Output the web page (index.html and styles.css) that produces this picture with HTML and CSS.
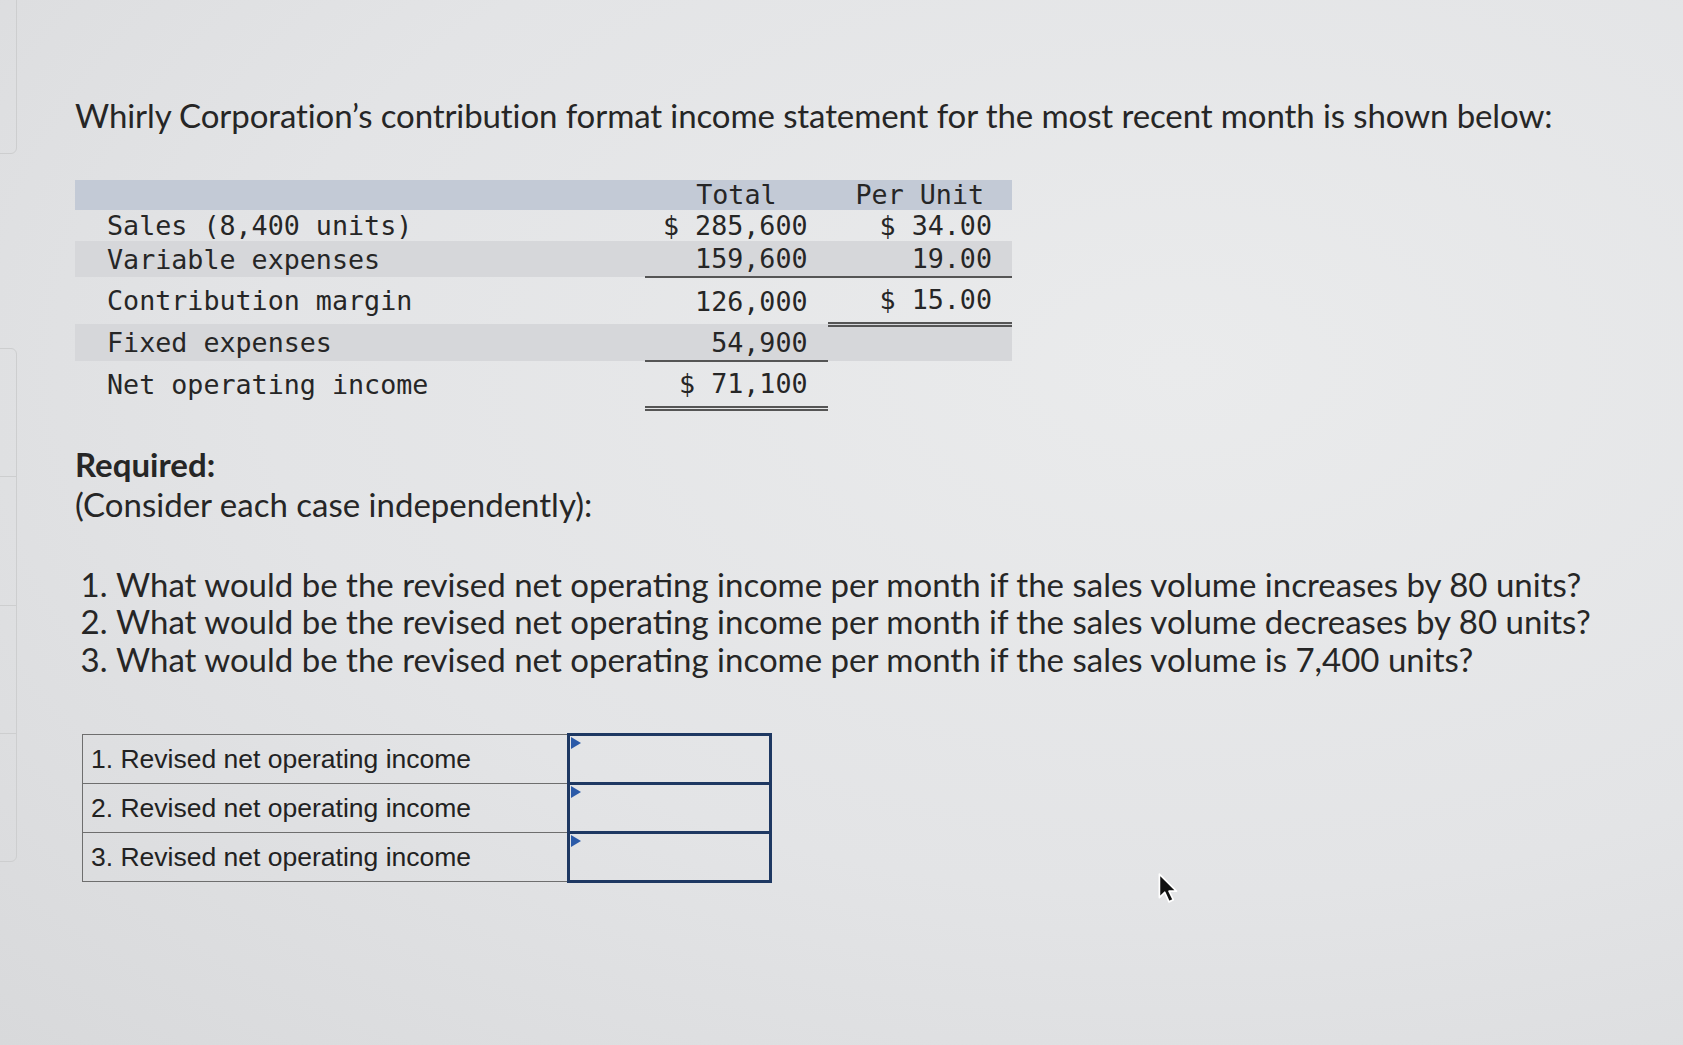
FILE: index.html
```html
<!DOCTYPE html>
<html lang="en">
<head>
    <meta charset="UTF-8">
    <title>Whirly Corporation</title>
    <link rel="stylesheet" href="styles.css">
</head>
<body>
    <div class="side-frame">
        <div class="side-box box-top"></div>
        <div class="side-box box-mid">
            <div class="side-cell"></div>
            <div class="side-cell"></div>
            <div class="side-cell"></div>
            <div class="side-cell"></div>
        </div>
    </div>

    <main class="question">
        <p class="intro">Whirly Corporation’s contribution format income statement for the most recent month is shown below:</p>

        <table class="statement">
            <tr class="head">
                <th class="label"></th>
                <th class="col-head">Total</th>
                <th class="col-head">Per Unit</th>
            </tr>
            <tr class="r-sales">
                <td class="label">Sales (8,400 units)</td>
                <td class="num">$ 285,600</td>
                <td class="num">$ 34.00</td>
            </tr>
            <tr class="r-var shade">
                <td class="label">Variable expenses</td>
                <td class="num line">159,600</td>
                <td class="num line">19.00</td>
            </tr>
            <tr class="r-cm">
                <td class="label">Contribution margin</td>
                <td class="num">126,000</td>
                <td class="num dbl">$ 15.00</td>
            </tr>
            <tr class="r-fixed shade">
                <td class="label">Fixed expenses</td>
                <td class="num line">54,900</td>
                <td class="num"></td>
            </tr>
            <tr class="r-net">
                <td class="label">Net operating income</td>
                <td class="num dbl">$ 71,100</td>
                <td class="num blank"></td>
            </tr>
        </table>

        <p class="required"><strong>Required:</strong><br>(Consider each case independently):</p>

        <ol class="cases">
            <li>What would be the revised net operating income per month if the sales volume increases by 80 units?</li>
            <li>What would be the revised net operating income per month if the sales volume decreases by 80 units?</li>
            <li>What would be the revised net operating income per month if the sales volume is 7,400 units?</li>
        </ol>

        <table class="answers">
            <tr>
                <td class="a-label">1. Revised net operating income</td>
                <td class="a-input"><span class="flag"></span></td>
            </tr>
            <tr>
                <td class="a-label">2. Revised net operating income</td>
                <td class="a-input"><span class="flag"></span></td>
            </tr>
            <tr>
                <td class="a-label">3. Revised net operating income</td>
                <td class="a-input"><span class="flag"></span></td>
            </tr>
        </table>
    </main>

    <svg class="cursor" width="24" height="32" viewBox="0 0 22 30">
        <path d="M2 2 L2 24 L7 19 L11 28 L15 26 L11 18 L18 18 Z" fill="#111" stroke="#fff" stroke-width="1.6" stroke-linejoin="round"/>
    </svg>
</body>
</html>
```

FILE: styles.css
```css
body {
    margin: 0;
    min-height: 1045px;
    font-family: 'Lato', 'Open Sans', sans-serif;
    color: #262626;
    background: radial-gradient(ellipse at 70% 35%, #eaebec 0%, #e3e4e6 55%, #d8d9db 100%);
    position: relative;
    overflow: hidden;
}

.side-frame {
    position: absolute;
    left: 0;
    top: 0;
    width: 18px;
    height: 1045px;
}

.side-box {
    position: absolute;
    left: -10px;
    width: 25px;
    border: 1px solid #cdcecf;
    border-radius: 6px;
}

.box-top {
    top: -10px;
    height: 162px;
}

.box-mid {
    top: 348px;
    height: 512px;
    display: flex;
    flex-direction: column;
}

.side-cell {
    flex: 1;
    border-bottom: 1px solid #cdcecf;
}

.side-cell:last-child {
    border-bottom: none;
}

.question {
    padding: 95px 0 0 75px;
}

.intro {
    margin: 0;
    font-size: 33px;
    line-height: 40px;
    letter-spacing: -0.1px;
}

.statement {
    margin-top: 45px;
    width: 937px;
    border-collapse: collapse;
    font-family: 'DejaVu Sans Mono', monospace;
    font-size: 26.7px;
    color: #262626;
}

.statement th,
.statement td {
    padding: 0;
    font-weight: normal;
    white-space: pre;
}

.statement .label {
    width: 537px;
    padding-left: 32px;
    text-align: left;
}

.statement .num {
    text-align: right;
    padding-right: 20px;
}

.statement .col-head {
    text-align: center;
}

.statement tr.head {
    background: #c3cad6;
    height: 30px;
    line-height: 30px;
}

.statement tr.head th:nth-child(2) {
    width: 182px;
}

.statement tr.head th:nth-child(3) {
    width: 184px;
}

.r-sales { height: 30px; }
.r-var { height: 36px; }
.r-cm { height: 47px; }
.r-fixed { height: 37px; }
.r-net { height: 47px; }

.statement tr.shade {
    background: #d6d7da;
}

.statement td.line {
    border-bottom: 2px solid #555;
}

.statement td.dbl {
    border-bottom: 5px double #555;
}

.required {
    margin: 33px 0 0;
    font-size: 33px;
    line-height: 40px;
}

.required strong {
    font-weight: 700;
}

.cases {
    margin: 42px 0 0;
    padding-left: 41px;
    font-size: 33px;
    line-height: 37.5px;
}

.answers {
    margin: 55px 0 0 7px;
    border-collapse: collapse;
    font-family: 'Liberation Sans', Arial, sans-serif;
    font-size: 26.5px;
    color: #222;
}

.answers td {
    height: 46px;
    padding: 0;
}

.a-label {
    width: 476px;
    padding-left: 8px !important;
    border: 1px solid #6e6e6e;
}

.a-input {
    width: 199px;
    position: relative;
    border: 3px solid #1e3862;
    vertical-align: top;
}

.flag {
    position: absolute;
    left: 1px;
    top: 1px;
    width: 0;
    height: 0;
    border-top: 6px solid transparent;
    border-bottom: 6px solid transparent;
    border-left: 10px solid #2b5aa8;
}

.cursor {
    position: absolute;
    left: 1157px;
    top: 872px;
}
```
